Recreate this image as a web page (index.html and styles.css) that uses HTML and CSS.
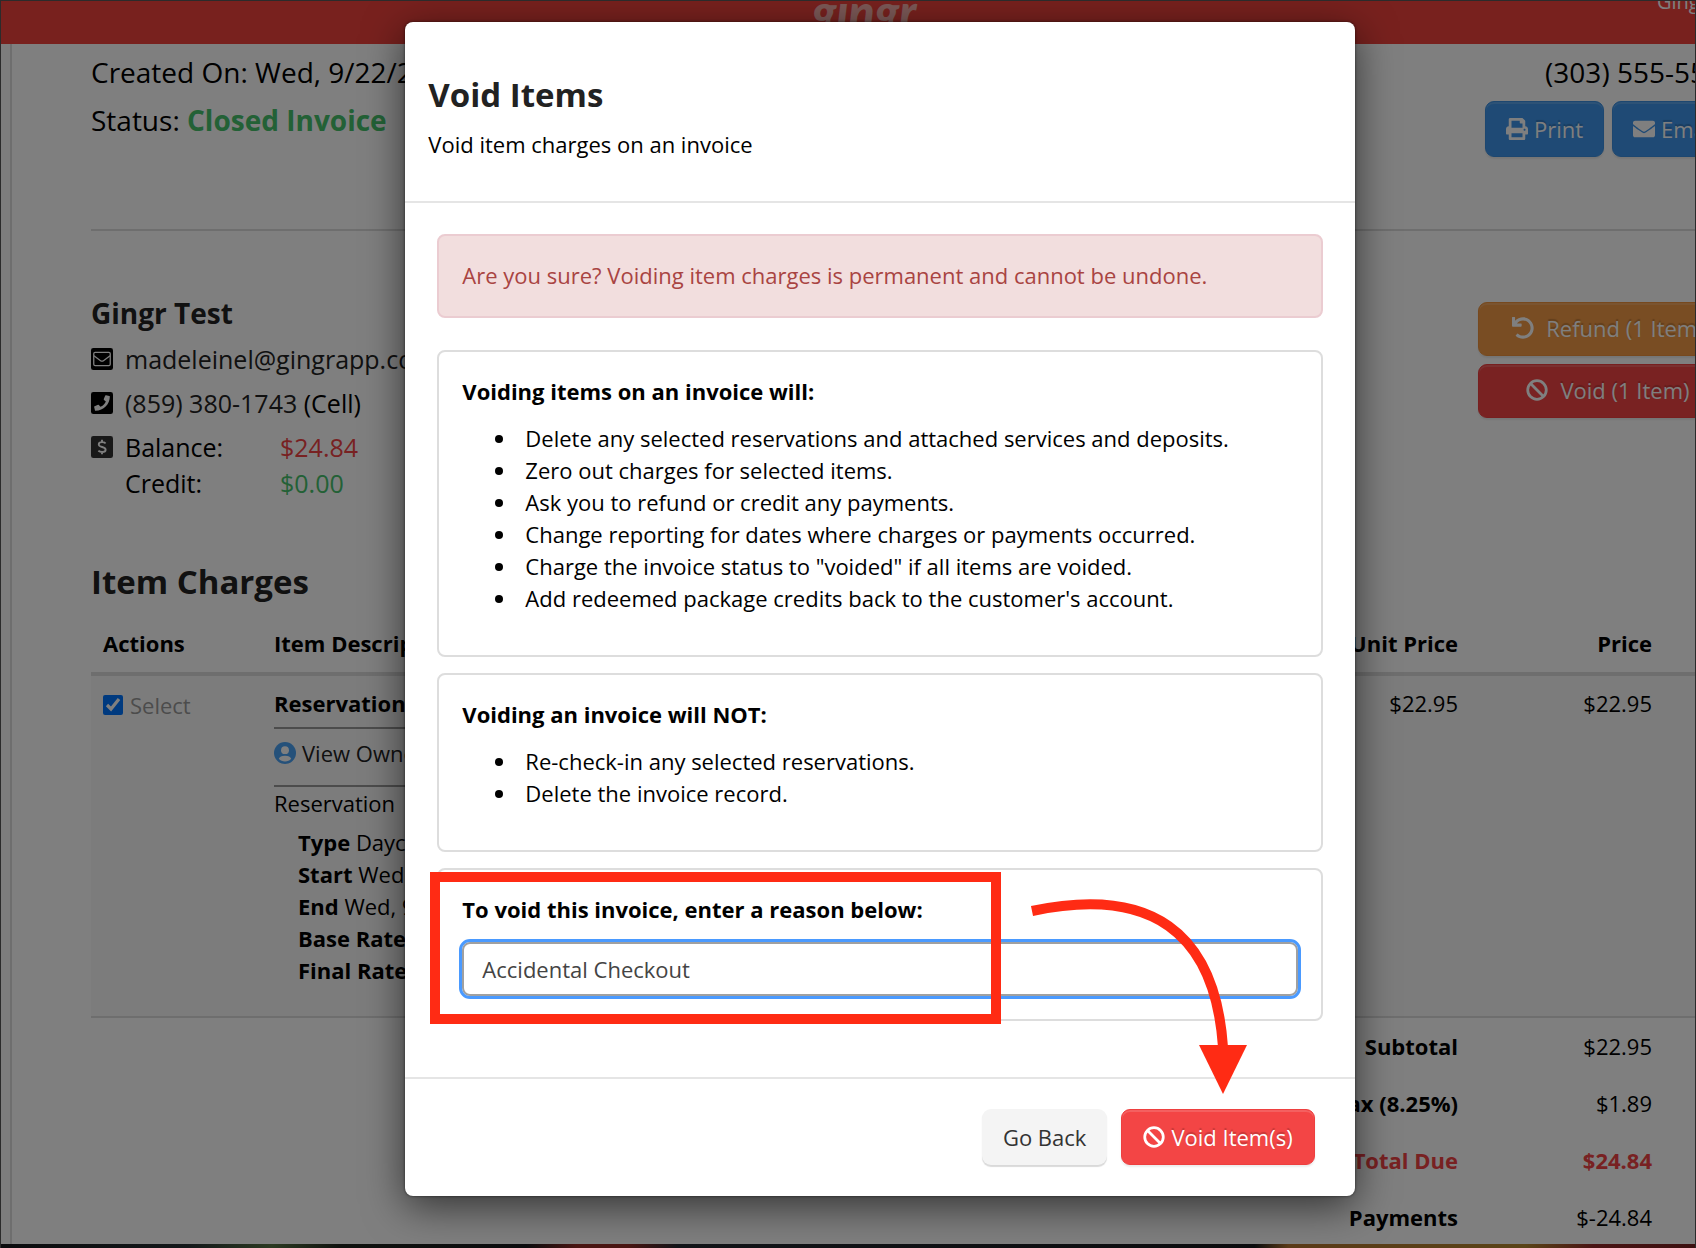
FILE: index.html
```html
<!DOCTYPE html>
<html lang="en">
<head>
  <meta charset="UTF-8">
  <meta name="viewport" content="width=device-width, initial-scale=1.0">
  <title>Gingr - Invoice</title>
  <link rel="stylesheet" href="styles.css">
</head>
<body>
  <svg class="sprite" aria-hidden="true">
    <symbol id="icon-print" viewBox="0 0 512 512"><path d="M448 192V77.25c0-8.49-3.37-16.62-9.37-22.63L393.37 9.37c-6-6-14.14-9.37-22.63-9.37H96C78.33 0 64 14.33 64 32v160c-35.35 0-64 28.65-64 64v112c0 8.84 7.16 16 16 16h48v96c0 17.67 14.33 32 32 32h320c17.67 0 32-14.33 32-32v-96h48c8.84 0 16-7.16 16-16V256c0-35.35-28.65-64-64-64zm-64 256H128v-96h256v96zm0-224H128V64h192v48c0 8.84 7.16 16 16 16h48v96zm48 72c-13.25 0-24-10.75-24-24 0-13.26 10.75-24 24-24s24 10.74 24 24c0 13.25-10.75 24-24 24z"/></symbol>
    <symbol id="icon-envelope" viewBox="0 0 512 512"><path d="M502.3 190.8c3.9-3.1 9.7-.2 9.7 4.7V400c0 26.5-21.5 48-48 48H48c-26.5 0-48-21.5-48-48V195.6c0-5 5.7-7.8 9.7-4.7 22.4 17.4 52.1 39.5 154.1 113.6 21.1 15.4 56.7 47.8 92.2 47.6 35.7.3 72-32.8 92.3-47.6 102-74.1 131.6-96.3 154-113.7zM256 320c23.2.4 56.6-29.2 73.4-41.4 132.7-96.3 142.8-104.7 173.4-128.7 5.8-4.5 9.2-11.5 9.2-18.9v-19c0-26.5-21.5-48-48-48H48c-26.5 0-48 21.5-48 48v19c0 7.4 3.4 14.3 9.2 18.9 30.6 23.9 40.7 32.4 173.4 128.7 16.8 12.2 50.2 41.8 73.4 41.4z"/></symbol>
    <symbol id="icon-undo" viewBox="0 0 512 512"><path d="M212.333 224.333H12c-6.627 0-12-5.373-12-12V12C0 5.373 5.373 0 12 0h48c6.627 0 12 5.373 12 12v78.112C117.773 39.279 184.26 7.47 258.175 8.007c136.906.994 246.448 111.623 246.157 248.532C504.041 393.258 393.12 504 256.333 504c-64.089 0-122.496-24.313-166.51-64.215-5.099-4.622-5.334-12.554-.467-17.42l33.967-33.967c4.474-4.474 11.662-4.717 16.401-.525C170.76 415.336 211.58 432 256.333 432c97.268 0 176-78.716 176-176 0-97.267-78.716-176-176-176-58.496 0-110.28 28.476-142.274 72.333h98.274c6.627 0 12 5.373 12 12v48c0 6.627-5.373 12-12 12z"/></symbol>
    <symbol id="icon-ban" viewBox="0 0 512 512"><g fill="none" stroke="currentColor" stroke-width="64"><circle cx="256" cy="256" r="216"/><path d="M105 105l302 302"/></g></symbol>
    <symbol id="icon-mail-square" viewBox="0 0 448 448"><rect width="448" height="448" rx="48"/><rect x="56" y="88" width="336" height="272" rx="28" fill="none" stroke="#fff" stroke-width="26"/><path d="M60 158l134 100q30 22 60 0l134-100" fill="none" stroke="#fff" stroke-width="26"/></symbol>
    <symbol id="icon-phone-square" viewBox="0 32 448 448"><path d="M400 32H48A48 48 0 0 0 0 80v352a48 48 0 0 0 48 48h352a48 48 0 0 0 48-48V80a48 48 0 0 0-48-48z"/><path fill="#fff" d="M94 416c-7.033 0-13.057-4.873-14.616-11.627l-14.998-65a15 15 0 0 1 8.707-17.16l69.998-29.999a15 15 0 0 1 17.518 4.289l30.997 37.885c48.944-22.963 88.297-62.858 110.781-110.78l-37.886-30.997a15.001 15.001 0 0 1-4.289-17.518l30-69.998a15 15 0 0 1 17.16-8.707l65 14.998A14.997 14.997 0 0 1 384 126c0 160.292-129.945 290-290 290z"/></symbol>
    <symbol id="icon-dollar-square" viewBox="0 0 448 448"><rect width="448" height="448" rx="48"/><path d="M298 150c-20-16-44-24-72-24-40 0-68 18-68 46 0 68 140 36 140 106 0 30-30 48-72 48-30 0-56-10-76-26M224 76v52M224 322v52" fill="none" stroke="#fff" stroke-width="38"/></symbol>
    <symbol id="icon-user" viewBox="0 0 512 512"><circle cx="256" cy="256" r="256"/><circle cx="256" cy="190" r="92" fill="#fff"/><path d="M112 392c20-52 60-72 144-72s124 20 144 72c-36 40-86 64-144 64s-108-24-144-64z" fill="#fff"/></symbol>
  </svg>

  <div class="window">
    <div class="page">
      <header class="topbar">
        <a class="brand" href="#">gingr</a>
        <a class="topbar-user" href="#">Gingr</a>
      </header>

      <main class="invoice">
        <section class="invoice-head">
          <div>
            <p>Created On: Wed, 9/22/21</p>
            <p>Status: <strong class="text-success">Closed Invoice</strong></p>
          </div>
          <div class="business">
            <p>(303) 555-5555</p>
            <div class="business-actions">
              <button class="btn btn-primary"><svg class="icon"><use href="#icon-print"/></svg>Print</button>
              <button class="btn btn-primary"><svg class="icon"><use href="#icon-envelope"/></svg>Email</button>
            </div>
          </div>
        </section>

        <section class="customer">
          <div>
            <h3>Gingr Test</h3>
            <ul class="contact">
              <li><svg class="icon"><use href="#icon-mail-square"/></svg><a href="#">madeleinel@gingrapp.com</a></li>
              <li><svg class="icon"><use href="#icon-phone-square"/></svg><span><a href="#">(859) 380-1743</a> (Cell)</span></li>
            </ul>
            <dl class="balance">
              <svg class="icon"><use href="#icon-dollar-square"/></svg>
              <dt>Balance:</dt>
              <dd class="text-danger">$24.84</dd>
              <dt>Credit:</dt>
              <dd class="text-success">$0.00</dd>
            </dl>
          </div>
          <div class="customer-actions">
            <button class="btn btn-warning"><svg class="icon"><use href="#icon-undo"/></svg>Refund (1 Item)</button>
            <button class="btn btn-danger"><svg class="icon"><use href="#icon-ban"/></svg>Void (1 Item)</button>
          </div>
        </section>

        <h2>Item Charges</h2>
        <table class="charges">
          <thead>
            <tr>
              <th class="col-actions">Actions</th>
              <th>Item Description</th>
              <th class="num">Unit Price</th>
              <th class="num col-price">Price</th>
              <th class="col-end"></th>
            </tr>
          </thead>
          <tbody>
            <tr>
              <td><label class="select"><input type="checkbox" checked>Select</label></td>
              <td>
                <strong>Reservation</strong>
                <div class="owner"><svg class="icon"><use href="#icon-user"/></svg><a href="#">View Owner</a></div>
                <div>Reservation</div>
                <ul class="details">
                  <li><strong>Type</strong> Daycare</li>
                  <li><strong>Start</strong> Wed, 9/22/21</li>
                  <li><strong>End</strong> Wed, 9/22/21</li>
                  <li><strong>Base Rate</strong></li>
                  <li><strong>Final Rate</strong></li>
                </ul>
              </td>
              <td class="num">$22.95</td>
              <td class="num">$22.95</td>
              <td></td>
            </tr>
          </tbody>
          <tfoot>
            <tr><th colspan="3">Subtotal</th><td>$22.95</td><td></td></tr>
            <tr><th colspan="3">Tax (8.25%)</th><td>$1.89</td><td></td></tr>
            <tr class="total-due"><th colspan="3">Total Due</th><td>$24.84</td><td></td></tr>
            <tr><th colspan="3">Payments</th><td>$-24.84</td><td></td></tr>
          </tfoot>
        </table>
      </main>

      <div class="backdrop">
        <div class="modal" role="dialog" aria-labelledby="modal-title">
          <div class="modal-header">
            <h2 id="modal-title">Void Items</h2>
            <p>Void item charges on an invoice</p>
          </div>
          <div class="modal-body">
            <div class="alert">Are you sure? Voiding item charges is permanent and cannot be undone.</div>
            <div class="well">
              <strong>Voiding items on an invoice will:</strong>
              <ul>
                <li>Delete any selected reservations and attached services and deposits.</li>
                <li>Zero out charges for selected items.</li>
                <li>Ask you to refund or credit any payments.</li>
                <li>Change reporting for dates where charges or payments occurred.</li>
                <li>Charge the invoice status to "voided" if all items are voided.</li>
                <li>Add redeemed package credits back to the customer's account.</li>
              </ul>
            </div>
            <div class="well">
              <strong>Voiding an invoice will NOT:</strong>
              <ul>
                <li>Re-check-in any selected reservations.</li>
                <li>Delete the invoice record.</li>
              </ul>
            </div>
            <div class="well reason">
              <label for="reason">To void this invoice, enter a reason below:</label>
              <input type="text" id="reason" value="Accidental Checkout">
              <div class="mark-box"></div>
              <svg class="mark-arrow" viewBox="0 0 222 198" aria-hidden="true">
                <path d="M4 14C122 -11 187 34 195 150" fill="none" stroke="#ff2b14" stroke-width="10"/>
                <path d="M171 148h48l-24 49z" fill="#ff2b14"/>
              </svg>
            </div>
          </div>
          <div class="modal-footer">
            <button class="btn btn-default">Go Back</button>
            <button class="btn btn-danger"><svg class="icon"><use href="#icon-ban"/></svg>Void Item(s)</button>
          </div>
        </div>
      </div>
    </div>
    <div class="desktop-strip"></div>
  </div>
</body>
</html>
```

FILE: styles.css
```css
* {
  box-sizing: border-box;
}

body {
  margin: 0;
  font-family: "Open Sans", "Noto Sans", sans-serif;
  font-size: 22px;
  line-height: 32px;
  color: #000;
}

h2, h3, p, ul, dl, dd {
  margin: 0;
  padding: 0;
}

ul {
  list-style: none;
}

a {
  color: #222;
  text-decoration: none;
}

.sprite {
  display: none;
}

.icon {
  width: 24px;
  height: 24px;
  flex: none;
  fill: currentColor;
}

.window {
  display: flex;
  flex-direction: column;
  height: 100vh;
  overflow: hidden;
  border: 1px solid #2b2b2b;
  border-bottom: 0;
}

/* the page is wider than the window and gets cut at the right */
.page {
  position: relative;
  flex: 1;
  min-height: 0;
  width: calc(100% + 64px);
  overflow: hidden;
  padding-left: 9px;
  background-color: #fafafa;
}

.desktop-strip {
  height: 4px;
  background: linear-gradient(90deg, #0c0c0e 0, #14181a 11%, #2c3a22 16%, #10120f 20%, #0c0c0e 31%, #4a1512 34%, #4a1512 37%, #121418 40%, #0c0c0e 74%, #5a3a18 76%, #5a4418 90%, #4a1414 94%, #3c1010 100%);
}

/* Top bar */
.topbar {
  display: flex;
  justify-content: space-between;
  height: 43px;
  margin-left: -9px;
  padding: 0 22px 0 811px;
  background-color: #f0433c;
}

.brand {
  font-family: "Lato", sans-serif;
  font-size: 48px;
  font-style: italic;
  font-weight: 900;
  line-height: 20px;
  color: rgba(255, 255, 255, .6);
}

.topbar-user {
  width: 80px;
  font-size: 20px;
  line-height: 2px;
  color: #fff;
}

/* Invoice */
.invoice {
  min-height: 100%;
  padding: 4px 21px 0 79px;
  border-left: 2px solid #ddd;
  background-color: #fff;
}

h2, h3 {
  color: #222;
}

h2 {
  font-size: 33px;
  line-height: 48px;
}

h3 {
  font-size: 28px;
  line-height: 48px;
}

.text-success {
  color: #46c26c;
}

.text-danger {
  color: #f04344;
}

.invoice-head,
.customer {
  display: flex;
  justify-content: space-between;
}

.invoice-head {
  height: 183px;
  border-bottom: 2px solid #ddd;
  font-size: 28px;
  line-height: 48px;
}

.business {
  text-align: right;
}

.business-actions {
  display: flex;
  gap: 8px;
  margin-top: 5px;
}

.btn {
  display: inline-flex;
  align-items: center;
  justify-content: center;
  gap: 6px;
  min-height: 56px;
  padding: 0 20px 1px;
  border: 1px solid transparent;
  border-radius: 9px;
  font: inherit;
  font-size: 22px;
  line-height: 32px;
  color: #fff;
  text-shadow: 0 -2px 1px rgba(0, 0, 0, .2);
  box-shadow: inset 0 2px 0 rgba(255, 255, 255, .15), 0 2px 2px rgba(0, 0, 0, .08);
}

.btn .icon {
  width: 22px;
  height: 22px;
}

.btn-primary {
  border-color: #3a8ee0;
  background-color: #3e95ea;
}

.btn-warning {
  border-color: #ee933c;
  background-color: #f29a46;
}

.btn-danger {
  border-color: #ee3f3f;
  background-color: #f34545;
}

.btn-default {
  background-color: #f4f4f4;
  color: #333;
  text-shadow: none;
  box-shadow: 0 2px 1px rgba(0, 0, 0, .15);
}

.customer {
  padding-top: 58px;
  font-size: 25px;
}

.contact li {
  display: flex;
  align-items: center;
  gap: 12px;
  height: 44px;
}

.balance {
  display: grid;
  grid-template-columns: 22px 143px auto;
  column-gap: 12px;
  line-height: 36px;
  padding-top: 4px;
}

.balance .icon {
  align-self: center;
}

.balance dt {
  grid-column: 2;
}

.contact .icon,
.balance .icon {
  width: 22px;
}

.balance .icon {
  color: #333;
}

.customer-actions {
  display: flex;
  flex-direction: column;
  gap: 8px;
  width: 260px;
  padding-top: 13px;
}

.customer-actions .btn {
  gap: 12px;
  min-height: 54px;
  padding: 0 0 2px;
  white-space: nowrap;
}

.invoice > h2 {
  margin-top: 57px;
}

/* Charges table */
.charges {
  width: 100%;
  border-collapse: collapse;
}

.charges th,
.charges td {
  padding: 12px;
  text-align: left;
  vertical-align: top;
}

.charges .num,
.charges tfoot th,
.charges tfoot td {
  text-align: right;
}

.charges thead th {
  padding: 21px 12px 13px;
  border-bottom: 4px solid #ddd;
}

.charges tbody tr {
  border-bottom: 2px solid #ddd;
  background-color: #f9f9f9;
}

.charges tbody td {
  padding: 11px 12px 30px;
}

.charges tfoot {
  line-height: 33px;
}

.col-actions {
  width: 171px;
}

.col-price {
  width: 194px;
}

.col-end {
  width: 74px;
}

.select {
  display: flex;
  align-items: center;
  gap: 7px;
  padding-top: 2px;
  color: #999;
}

.select input {
  width: 20px;
  height: 20px;
  margin: 0;
  accent-color: #0075ff;
}

.owner {
  display: flex;
  align-items: center;
  gap: 6px;
  height: 60px;
  margin-top: 8px;
  padding-bottom: 8px;
  border-top: 2px solid #999;
  border-bottom: 2px solid #999;
}

.owner .icon {
  width: 22px;
  color: #4ba3f5;
}

.details {
  padding: 7px 0 0 24px;
}

.total-due {
  color: #f04344;
  font-weight: bold;
}

/* Modal */
.backdrop {
  position: absolute;
  inset: 0;
  display: flex;
  align-items: flex-start;
  justify-content: center;
  padding-top: 21px;
  background-color: rgba(0, 0, 0, .5);
}

.modal {
  width: 54%;
  border-radius: 8px;
  background-color: #fff;
  box-shadow: 0 10px 40px rgba(0, 0, 0, .6), 0 0 3px rgba(0, 0, 0, .6);
}

.modal-header {
  padding: 49px 23px 41px;
  border-bottom: 2px solid #e5e5e5;
}

.modal-header h2 {
  margin-bottom: 9px;
}

.modal-body {
  display: flex;
  flex-direction: column;
  gap: 16px;
  padding: 31px 32px 56px;
}

.alert,
.well {
  border: 2px solid #ddd;
  border-radius: 8px;
  padding: 23px;
}

.alert {
  margin-bottom: 16px;
  padding-bottom: 25px;
  border-color: #ebccd1;
  background-color: #f2dede;
  color: #a94442;
}

.well ul {
  list-style: disc;
  padding: 15px 0 18px 56px;
}

.well li {
  padding-left: 7px;
}

.reason {
  position: relative;
}

.reason label {
  display: block;
  font-weight: bold;
}

.reason input {
  display: block;
  width: 100%;
  height: 54px;
  margin-top: 17px;
  padding: 0 18px;
  border: 2px solid #a0a0a0;
  border-radius: 8px;
  outline: 3px solid #4a9aff;
  font: inherit;
  color: #444;
}

/* Red highlight drawn over the reason field */
.mark-box {
  position: absolute;
  top: 2px;
  left: -9px;
  width: 571px;
  height: 152px;
  border: 10px solid #ff2b14;
}

.mark-arrow {
  position: absolute;
  top: 27px;
  left: 589px;
  width: 222px;
  height: 198px;
}

.modal-footer {
  display: flex;
  justify-content: flex-end;
  gap: 14px;
  padding: 30px 40px 31px;
  border-top: 2px solid #e5e5e5;
}

.modal-footer .btn-danger {
  padding: 0 21px 1px;
}
```
